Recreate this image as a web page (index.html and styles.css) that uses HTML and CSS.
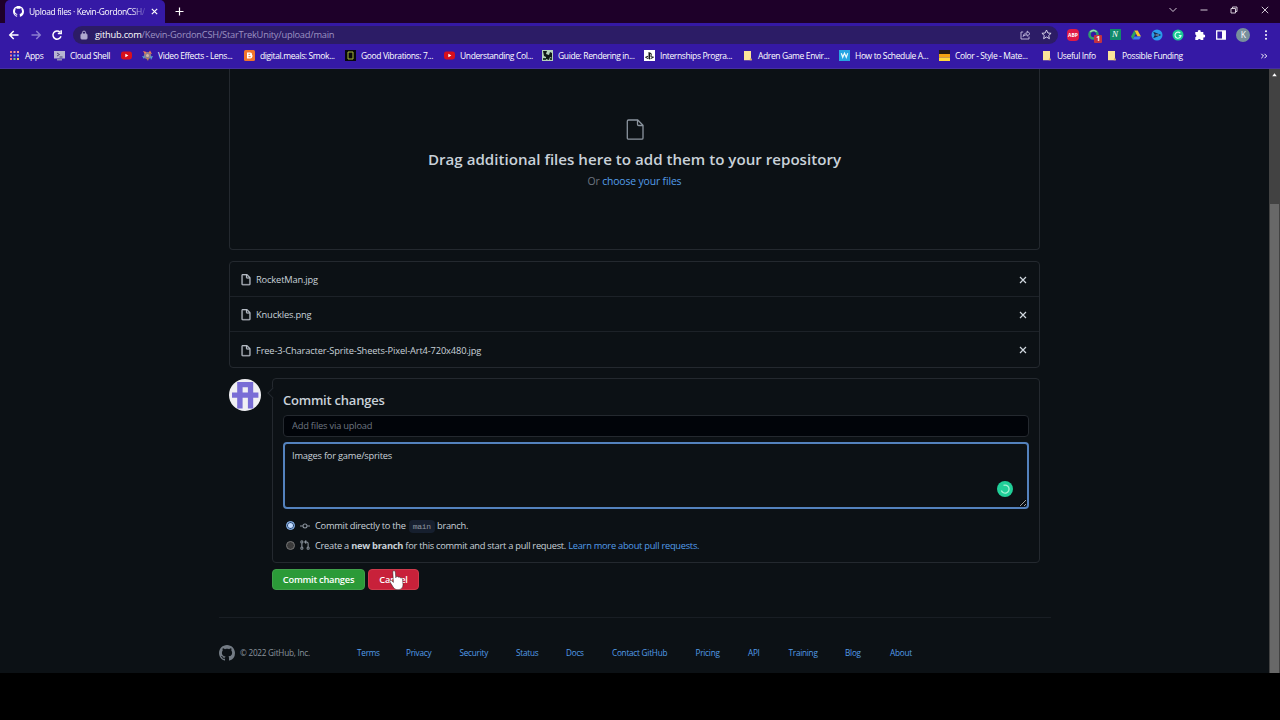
FILE: index.html
```html
<!DOCTYPE html>
<html lang="en">

<head>
    <meta charset="UTF-8">
    <title>Upload files · Kevin-GordonCSH/StarTrekUnity</title>
    <link rel="stylesheet" href="styles.css">
</head>

<body>

    <!-- shared icons -->
    <svg class="defs">
        <symbol id="github" viewBox="0 0 16 16"><path d="M8 0C3.58 0 0 3.58 0 8c0 3.54 2.29 6.53 5.47 7.59.4.07.55-.17.55-.38 0-.19-.01-.82-.01-1.49-2.01.37-2.53-.49-2.69-.94-.09-.23-.48-.94-.82-1.13-.28-.15-.68-.52-.01-.53.63-.01 1.08.58 1.23.82.72 1.21 1.87.87 2.33.66.07-.52.28-.87.51-1.07-1.78-.2-3.64-.89-3.64-3.95 0-.87.31-1.59.82-2.15-.08-.2-.36-1.02.08-2.12 0 0 .67-.21 2.2.82.64-.18 1.32-.27 2-.27s1.36.09 2 .27c1.53-1.04 2.2-.82 2.2-.82.44 1.1.16 1.92.08 2.12.51.56.82 1.27.82 2.15 0 3.07-1.87 3.75-3.65 3.95.29.25.54.73.54 1.48 0 1.07-.01 1.93-.01 2.2 0 .21.15.46.55.38A8.01 8.01 0 0 0 16 8c0-4.42-3.58-8-8-8z"/></symbol>
        <symbol id="file" viewBox="0 0 16 16"><path d="M3.75 1.5a.25.25 0 0 0-.25.25v11.5c0 .138.112.25.25.25h8.5a.25.25 0 0 0 .25-.25V6H9.75A1.75 1.75 0 0 1 8 4.25V1.5H3.75zm5.75.56v2.19c0 .138.112.25.25.25h2.19L9.5 2.06zM2 1.75C2 .784 2.784 0 3.75 0h5.086c.464 0 .909.184 1.237.513l3.414 3.414c.329.328.513.773.513 1.237v8.086A1.75 1.75 0 0 1 12.25 15h-8.5A1.75 1.75 0 0 1 2 13.25V1.75z"/></symbol>
        <symbol id="x" viewBox="0 0 10 10"><path d="M2 2l6 6M8 2l-6 6"/></symbol>
        <symbol id="youtube" viewBox="0 0 11 11"><rect y="1.5" width="11" height="8" rx="2.4" fill="#d80f1c"/><path d="M4.3 3.7v3.6l3.1-1.8z" fill="#fff"/></symbol>
        <symbol id="folder" viewBox="0 0 9 11"><path d="M1 1h7v6.500l.8 2.800H1z" fill="#fbe49a"/><path d="M7.300 7.500l1.500 2.800H6.600z" fill="#e2b95c"/></symbol>
    </svg>

    <header class="browser">
        <div class="titlebar">
            <div class="tab">
                <svg class="tab-logo"><use href="#github"/></svg>
                <span class="tab-title">Upload files · Kevin-GordonCSH/</span>
                <svg class="tab-close"><use href="#x"/></svg>
            </div>
            <svg class="new-tab" viewBox="0 0 9 9"><path d="M4.500.5v8M.5 4.500h8"/></svg>
            <div class="window-buttons">
                <svg viewBox="0 0 10 10"><path d="M1.500 3L5 6.500 8.500 3"/></svg>
                <svg viewBox="0 0 10 10"><path d="M1.500 5h7"/></svg>
                <svg viewBox="0 0 10 10"><path d="M2 3.500h4.500V8H2zM3.500 3.500V2H8v4.500H6.500"/></svg>
                <svg viewBox="0 0 10 10"><path d="M1.800 1.800l6.400 6.400M8.200 1.800L1.800 8.200"/></svg>
            </div>
        </div>

        <div class="toolbar">
            <div class="nav">
                <svg viewBox="0 0 12 12"><path d="M10.500 6H2M5.700 2L1.800 6l3.900 4"/></svg>
                <svg class="dim" viewBox="0 0 12 12"><path d="M1.500 6H10M6.300 2l3.900 4-3.900 4"/></svg>
                <svg viewBox="0 0 12 12"><path d="M10 7.200A4.100 4.100 0 1 1 9 3.200M10.200 1.200v3.400H6.800"/></svg>
            </div>
            <div class="omnibox">
                <svg class="lock" viewBox="0 0 8 10"><rect x="1" y="4" width="6" height="5" rx=".7"/><path d="M2.400 4V2.700a1.600 1.600 0 0 1 3.200 0V4"/></svg>
                <span class="url"><b>github.com</b>/Kevin-GordonCSH/StarTrekUnity/upload/main</span>
                <svg class="share" viewBox="0 0 11 11"><path d="M3.200 3H1v7h8V7.500M3.200 7.500c.3-2.300 1.600-3.500 4-3.500V2L10 4.700 7.200 7.200V5.700C5.500 5.700 4.200 6.200 3.200 7.500z"/></svg>
                <svg class="star" viewBox="0 0 11 11"><path d="M5.500 1l1.400 3 3.200.3-2.400 2.200.7 3.200-2.900-1.700-2.900 1.700.7-3.200L.9 4.300 4.100 4z"/></svg>
            </div>
            <div class="extensions">
                <span class="abp">ABP</span>
                <span class="badge-wrap">
                    <svg viewBox="0 0 12 12"><circle cx="5.500" cy="5.500" r="4" fill="none" stroke="#2f9e6b" stroke-width="2.600"/><path d="M2.300 3A4 4 0 0 1 8.500 2.800" fill="none" stroke="#9ed6bc" stroke-width="1.400"/></svg>
                    <i class="count">1</i>
                </span>
                <span class="script-n">N</span>
                <svg viewBox="0 0 12 12"><path d="M4.200 1.500h3.500l3.300 6H7.600z" fill="#f6c52b"/><path d="M4.200 1.500L1 7.500l1.700 3 3.300-6z" fill="#2ba35f"/><path d="M4.500 7.500H11l-1.700 3H2.700z" fill="#3d7df0"/></svg>
                <svg viewBox="0 0 12 12"><circle cx="6" cy="6" r="5.500" fill="#2a9bea"/><path d="M2.200 2.800L10.300 6 2.200 9.200 3.800 6z" fill="#17254d"/><path d="M4.500 6H8" stroke="#dff" stroke-width=".7"/></svg>
                <svg viewBox="0 0 12 12"><circle cx="6" cy="6" r="5.500" fill="#19c894"/><path d="M8.300 4.200A3 3 0 1 0 9 6.600H6.800" fill="none" stroke="#d9fff0" stroke-width="1.100"/></svg>
                <svg viewBox="0 0 12 12"><path d="M1.300 3h2.500a1.500 1.500 0 1 1 2.900 0h2.600v2.600a1.500 1.500 0 1 1 0 2.900V11H6.800a1.500 1.500 0 0 0-2.900 0H1.300V8.300a1.400 1.400 0 0 0 0-2.700z" fill="#fff"/></svg>
                <svg viewBox="0 0 12 12"><path d="M1.700 1.900h8.600v8.200H1.700z" fill="none" stroke="#fff" stroke-width="1.300"/><path d="M7 2h3.300v8H7z" fill="#fff"/></svg>
                <span class="profile">K</span>
                <svg class="menu" viewBox="0 0 12 12"><circle cx="6" cy="2.200" r="1"/><circle cx="6" cy="6" r="1"/><circle cx="6" cy="9.800" r="1"/></svg>
            </div>
        </div>

        <nav class="bookmarks">
            <a><svg viewBox="0 0 11 11"><path d="M1 1h2v2H1zM1 8h2v2H1zM1 4.500h2v2H1z" fill="#ef7b86"/><path d="M4.500 1h2v2h-2zM8 1h2v2H8z" fill="#f39aa0"/><path d="M4.500 4.500h2v2h-2zM8 4.500h2v2H8z" fill="#79b4fb"/><path d="M4.500 8h2v2h-2z" fill="#6cce8c"/><path d="M8 8h2v2H8z" fill="#f5d05f"/></svg><span>Apps</span></a>
            <a><svg viewBox="0 0 11 11"><path d="M0 1h11v7.500H0z" fill="#b7b5d2"/><path d="M3 9h5v1.500H3z" fill="#8e8bb5"/><path d="M3 3l2.500 1.500L3 6M5.500 7h3" fill="none" stroke="#4a4379"/></svg><span>Cloud Shell</span></a>
            <a><svg><use href="#youtube"/></svg></a>
            <a><svg viewBox="0 0 11 11"><circle cx="5.500" cy="5.500" r="3.600" fill="#8a7f8c"/><path d="M1 1l3.500 1L3 4.500zM8 .5L10 4 6.500 3z" fill="#ef7b4f"/><path d="M0 6l3 .5L2 9zM8 6.500l3-.5-2 4z" fill="#58a4cf"/><path d="M4 8h3l-1 3z" fill="#b98152"/><circle cx="5.500" cy="5.500" r="1.500" fill="#d8b5a4"/></svg><span>Video Effects - Lens...</span></a>
            <a><svg viewBox="0 0 11 11"><rect width="11" height="11" rx="1.500" fill="#f2742b"/><path d="M3 2.500h3c2 0 2 1.500 2 2.300.8.300.8 3.700-1.700 3.700H3z" fill="#fff"/><path d="M4.500 4.300h1.600M4.500 6.700h2.200" stroke="#f2742b"/></svg><span>digital.meals: Smok...</span></a>
            <a><svg viewBox="0 0 11 11"><path d="M0 0h11v11H0z" fill="#07080b"/><path d="M3 2h5v7H3z" fill="none" stroke="#a9b83c"/></svg><span>Good Vibrations: 7...</span></a>
            <a><svg><use href="#youtube"/></svg><span>Understanding Col...</span></a>
            <a><svg viewBox="0 0 11 11"><path d="M0 0h11v11H0z" fill="#b5d2ba"/><path d="M1 1h4L4 4l3 1 1-3 2 1v5l-2-1-1 3-3-1V7L2 6z" fill="#101816"/><path d="M1 8h3v2H1zM8 8h2v2H8z" fill="#25402e"/></svg><span>Guide: Rendering in...</span></a>
            <a><svg viewBox="0 0 11 11"><path d="M0 0h11v11H0z" fill="#fff"/><path d="M4.500 2v7l1.500.5V3.800c1 .2.800 1.800.4 2.200 1.800.6 1.900-2.500.1-3.300z" fill="#151515"/><path d="M4 6.200L1.500 7.300 4 8.500M6.500 6.600l3 .6-3 1.500" fill="none" stroke="#151515"/></svg><span>Internships Progra...</span></a>
            <a><svg class="folder"><use href="#folder"/></svg><span>Adren Game Envir...</span></a>
            <a><svg viewBox="0 0 11 11"><path d="M0 0h11v11H0z" fill="#27a5e2"/><path d="M2.300 3.300l1.400 4 1.800-4 1.800 4 1.400-4" fill="none" stroke="#e9faff" stroke-width="1.200"/></svg><span>How to Schedule A...</span></a>
            <a><svg viewBox="0 0 11 11"><path d="M0 0h11v4H0z" fill="#231b14"/><path d="M0 4h11v3.500H0z" fill="#f2a313"/><path d="M0 7.500h11V11H0z" fill="#ffd83c"/></svg><span>Color - Style - Mate...</span></a>
            <a><svg class="folder"><use href="#folder"/></svg><span>Useful Info</span></a>
            <a><svg class="folder"><use href="#folder"/></svg><span>Possible Funding</span></a>
            <a class="more"><svg viewBox="0 0 8 8"><path d="M1.300 1.800L3.500 4 1.300 6.200M4.500 1.800L6.700 4 4.500 6.200"/></svg></a>
        </nav>
    </header>

    <div class="viewport">
        <main class="page">
            <section class="dropzone">
                <svg class="big-file" viewBox="0 0 18 21"><path d="M2.500 1h9.200L17 6.200V19a1.200 1.200 0 0 1-1.200 1.200H2.500A1.200 1.200 0 0 1 1.300 19V2.200A1.200 1.200 0 0 1 2.500 1zM11.500 1v4.300c0 .8.400 1.200 1.200 1.200H17"/></svg>
                <h1>Drag additional files here to add them to your repository</h1>
                <p>Or <a>choose your files</a></p>
            </section>

            <ul class="files">
                <li><svg class="octicon"><use href="#file"/></svg><span>RocketMan.jpg</span><svg class="remove"><use href="#x"/></svg></li>
                <li><svg class="octicon"><use href="#file"/></svg><span>Knuckles.png</span><svg class="remove"><use href="#x"/></svg></li>
                <li><svg class="octicon"><use href="#file"/></svg><span>Free-3-Character-Sprite-Sheets-Pixel-Art4-720x480.jpg</span><svg class="remove"><use href="#x"/></svg></li>
            </ul>

            <form class="commit">
                <svg class="avatar" viewBox="0 0 32 32">
                    <circle cx="16" cy="16" r="16" fill="#f0f0f4"/>
                    <path d="M8.200 3h16v10.600h5.200v5.200h-5.200v10.600h-5.300V18.800h-5.300v10.600H8.200V18.800H3v-5.200h5.200zM13.600 8.300v5.300h5.300V8.300z" fill="#796dd6"/>
                </svg>
                <div class="commit-body">
                    <div class="commit-box">
                        <h2>Commit changes</h2>
                        <input class="summary" type="text" placeholder="Add files via upload">
                        <div class="description">
                            <textarea>Images for game/sprites</textarea>
                            <svg class="grammarly" viewBox="0 0 16 16"><circle cx="8" cy="8" r="8" fill="#20cf98"/><path d="M6.500 4.400A4 4 0 1 1 4.300 9.500" fill="none" stroke="#a4f3d6" stroke-width="1.300"/></svg>
                        </div>
                        <label class="choice">
                            <input type="radio" name="target" checked>
                            <svg viewBox="0 0 16 16"><path d="M0 8h4.500M11.500 8H16"/><circle cx="8" cy="8" r="3.200"/></svg>
                            <span>Commit directly to the <code>main</code> branch.</span>
                        </label>
                        <label class="choice">
                            <input type="radio" name="target">
                            <svg viewBox="0 0 16 16"><circle cx="3" cy="3" r="1.700"/><circle cx="3" cy="13" r="1.700"/><circle cx="13" cy="13" r="1.700"/><path d="M3 5v6M13 11V5.500C13 4 12 3.200 10.500 3.200H8M10 .8L7.600 3.200 10 5.600"/></svg>
                            <span>Create a <b>new branch</b> for this commit and start a pull request. <a>Learn more about pull requests.</a></span>
                        </label>
                    </div>
                    <div class="buttons">
                        <button type="button" class="green">Commit changes</button>
                        <button type="button" class="red">Cancel
                            <svg class="cursor" viewBox="0 0 15 21"><path d="M3.800 1.800c0-1.500 2.300-1.500 2.500 0l.5 6 .3-1c.8-.8 2-.3 2.100.5.8-.6 2-.2 2.100.7 1-.5 2.200.1 2.200 1.200l.5 5.500c0 3-2 5-5 5-2.500 0-4-1-5-2.900L1 12c-.7-1.300.9-2.300 1.900-1.200l1.500 1.600z"/></svg>
                        </button>
                    </div>
                </div>
            </form>

            <footer>
                <svg class="footer-logo"><use href="#github"/></svg>
                <span class="copy">© 2022 GitHub, Inc.</span>
                <nav class="links">
                    <a>Terms</a>
                    <a>Privacy</a>
                    <a>Security</a>
                    <a>Status</a>
                    <a>Docs</a>
                    <a>Contact GitHub</a>
                    <a>Pricing</a>
                    <a>API</a>
                    <a>Training</a>
                    <a>Blog</a>
                    <a>About</a>
                </nav>
            </footer>
        </main>
        <div class="scrollbar">
            <svg viewBox="0 0 10 10"><path d="M5 3l2.500 3.500h-5z"/></svg>
            <div class="thumb"></div>
        </div>
    </div>

</body>

</html>
```

FILE: styles.css
```css
* {
    box-sizing: border-box;
}

body {
    margin: 0;
    height: 720px;
    overflow: hidden;
    background: #000;
    color: #c9d1d9;
    font-family: "Open Sans", "Noto Sans", sans-serif;
    font-size: 9px;
}

.defs {
    display: none;
}

svg {
    display: block;
    flex: none;
}

/* browser window */
.browser {
    height: 69px;
    background: #3519a5;
    border-bottom: 1px solid #452fa0;
    color: #fff;
}

.titlebar {
    height: 23px;
    display: flex;
    align-items: center;
    background: #1e0029;
}

.tab {
    width: 160px;
    height: 23px;
    margin-left: 5px;
    padding: 0 6px 0 8px;
    display: flex;
    align-items: center;
    background: #3519a5;
    border-radius: 5px 5px 0 0;
}

.tab-logo {
    width: 11px;
    height: 11px;
    fill: #fff;
}

.tab-title {
    margin-left: 5px;
    white-space: nowrap;
    font-size: 8.5px;
    letter-spacing: -0.38px;
    -webkit-mask-image: linear-gradient(to right, #000 88%, rgba(0, 0, 0, 0.2));
    mask-image: linear-gradient(to right, #000 88%, rgba(0, 0, 0, 0.2));
}

.tab-close {
    width: 9px;
    height: 9px;
    margin-left: auto;
    stroke: #fff;
    stroke-width: 1.3;
}

.new-tab {
    width: 9px;
    height: 9px;
    margin-left: 10px;
    stroke: #fff;
    stroke-width: 1.2;
}

.window-buttons {
    display: flex;
    gap: 20.5px;
    margin: -4px 10.5px 0 auto;
}

.window-buttons svg {
    width: 10px;
    height: 10px;
    fill: none;
    stroke: #e4dce8;
    stroke-width: 0.9;
}

.toolbar {
    height: 23px;
    display: flex;
    align-items: center;
}

.nav {
    width: 73px;
    padding-left: 8px;
    display: flex;
    gap: 9.5px;
}

.nav svg {
    width: 12px;
    height: 12px;
    fill: none;
    stroke: #fff;
    stroke-width: 1.5;
}

.nav .dim {
    stroke: #8b7dd0;
}

.omnibox {
    width: 985px;
    height: 18px;
    padding: 0 6px 0 7px;
    display: flex;
    align-items: center;
    background: #2c1c66;
    border-radius: 9px;
}

.lock {
    width: 8px;
    height: 10px;
    fill: #b0a8ce;
    stroke: #b0a8ce;
}

.lock path {
    fill: none;
}

.url {
    margin-left: 7px;
    margin-right: auto;
    color: #9c92c2;
    font-size: 9.3px;
    letter-spacing: -0.23px;
}

.url b {
    color: #fff;
    font-weight: 400;
}

.share,
.star {
    width: 11px;
    height: 11px;
    fill: none;
    stroke: #c8c1e3;
    stroke-width: 0.9;
}

.star {
    margin-left: 10px;
    stroke: #e6e2f5;
}

.extensions {
    display: flex;
    align-items: center;
    gap: 9.3px;
    margin-left: 9px;
}

.extensions > svg,
.badge-wrap svg {
    width: 12px;
    height: 12px;
}

.abp {
    width: 12px;
    height: 12px;
    border-radius: 4px;
    background: #e01b45;
    font-size: 5px;
    font-weight: 700;
    line-height: 12px;
    text-align: center;
}

.badge-wrap {
    position: relative;
}

.count {
    position: absolute;
    left: 6px;
    top: 6px;
    width: 8px;
    height: 8px;
    border-radius: 1px;
    background: #c33240;
    font-size: 7px;
    font-style: normal;
    font-weight: 700;
    line-height: 8px;
    text-align: center;
}

.script-n {
    width: 11px;
    height: 11px;
    background: #118a6a;
    font: italic 9px/11px "Liberation Serif", serif;
    text-align: center;
}

.profile {
    width: 14px;
    height: 14px;
    border-radius: 50%;
    background: #78909c;
    font-size: 8.5px;
    line-height: 14px;
    text-align: center;
}

.menu {
    fill: #fff;
}

.bookmarks {
    height: 19px;
    padding-left: 9px;
    display: grid;
    grid-template-columns: 45px 67px 21px 102px 101px 99px 98px 102px 98px 97px 100px 102px 65px 154px auto;
    align-items: center;
    font-size: 8.5px;
    letter-spacing: -0.38px;
    white-space: nowrap;
}

.bookmarks a {
    display: flex;
    align-items: center;
    gap: 5px;
}

.bookmarks svg {
    width: 11px;
    height: 11px;
}

.bookmarks .more svg {
    width: 8px;
    height: 8px;
    fill: none;
    stroke: #fff;
}

/* github page */
.viewport {
    height: 604px;
    display: flex;
    background: #0c1115;
}

.page {
    width: 811px;
    margin-left: 229px;
}

.page a {
    color: #539de9;
}

.dropzone {
    height: 181px;
    padding-top: 50px;
    border: 1px solid #24292f;
    border-top: 0;
    border-radius: 0 0 4px 4px;
    text-align: center;
}

.big-file {
    width: 18px;
    height: 21px;
    margin: 0 auto;
    fill: none;
    stroke: #8b949e;
    stroke-width: 1.3;
}

.dropzone h1 {
    margin: 8px 0 0;
    font-size: 15.13px;
    font-weight: 600;
    line-height: 22px;
}

.dropzone p {
    margin: 2px 0 0;
    color: #6e7681;
    font-size: 10.4px;
    letter-spacing: -0.14px;
    line-height: 18px;
}

.files {
    margin: 11px 0 0;
    padding: 0;
    list-style: none;
    border: 1px solid #24292f;
    border-radius: 4px;
}

.files li {
    height: 35px;
    padding: 1px 11px 0;
    display: flex;
    align-items: center;
    border-bottom: 1px solid #1d2228;
}

.files li:last-child {
    border-bottom: 0;
}

.octicon {
    width: 12px;
    height: 12px;
    margin: 1px 4px 0 -1px;
    fill: #b4bcc4;
    stroke: #b4bcc4;
    stroke-width: 0.3;
}

.files span {
    margin-right: auto;
    font-size: 9.3px;
    letter-spacing: -0.15px;
}

.remove {
    width: 10px;
    height: 10px;
    stroke: #d0d7de;
    stroke-width: 1.2;
}

.commit {
    display: flex;
    gap: 11px;
    margin-top: 10px;
}

.avatar {
    width: 32px;
    height: 32px;
    margin-top: 0.5px;
}

.commit-body {
    flex: 1;
}

.commit-box {
    position: relative;
    height: 185px;
    padding: 11px 10px 0;
    border: 1px solid #24292f;
    border-radius: 4px;
}

/* pointer toward the avatar */
.commit-box::before {
    content: "";
    position: absolute;
    left: -4.500px;
    top: 10px;
    width: 7px;
    height: 7px;
    background: #0c1115;
    border: solid #24292f;
    border-width: 0 0 1px 1px;
    transform: rotate(45deg);
}

.commit-box h2 {
    margin: 0;
    font-size: 13px;
    font-weight: 600;
    letter-spacing: -0.22px;
    line-height: 20px;
}

.summary {
    display: block;
    width: 100%;
    height: 22px;
    margin-top: 5px;
    padding: 0 8px 1px;
    background: #010409;
    border: 1px solid #24292f;
    border-radius: 4px;
    font: 9.3px "Open Sans", sans-serif;
    letter-spacing: -0.2px;
}

.summary::placeholder {
    color: #6e7681;
}

.description {
    position: relative;
    margin-top: 5px;
}

textarea {
    display: block;
    width: 100%;
    height: 67px;
    padding: 5px 7px;
    background: #0c1115;
    border: 2px solid #5482bd;
    border-radius: 4px;
    color: #c9d1d9;
    font: 9.3px/14px "Open Sans", sans-serif;
    letter-spacing: -0.22px;
}

.grammarly {
    position: absolute;
    right: 16px;
    bottom: 12px;
    width: 16px;
    height: 16px;
}

.choice {
    height: 19.500px;
    padding-left: 3px;
    display: flex;
    align-items: center;
    font-size: 9.3px;
    letter-spacing: -0.27px;
}

.description + .choice {
    margin-top: 7px;
}

.choice input {
    appearance: none;
    width: 9px;
    height: 9px;
    margin: 0 5px 0 0;
    background: #3b3b3b;
    border: 1px solid #757575;
    border-radius: 50%;
}

.choice input:checked {
    background: #c3dcff;
    border: 1px solid #7ba6de;
    box-shadow: inset 0 0 0 1px #26456e;
}

.choice svg {
    width: 10px;
    height: 10px;
    margin-right: 5px;
    fill: none;
    stroke: #8b949e;
    stroke-width: 1.7;
}

code {
    margin: 0 0 0 1px;
    padding: 2px 4px;
    background: #161f2e;
    border-radius: 4px;
    color: #8b949e;
    font: 8px "Liberation Mono", monospace;
}

.buttons {
    display: flex;
    gap: 3px;
    margin-top: 6px;
}

.buttons button {
    position: relative;
    height: 21px;
    padding: 0;
    border: 1px solid #3fa04a;
    border-radius: 4px;
    background: #2b9a38;
    color: #fff;
    font: 600 9.3px "Open Sans", sans-serif;
    letter-spacing: -0.25px;
}

.buttons .green {
    width: 93px;
}

.buttons .red {
    width: 51px;
    background: #c8213a;
    border-color: #cf3a4c;
}

.cursor {
    position: absolute;
    left: 20px;
    top: 0;
    width: 15px;
    height: 21px;
    fill: #fff;
    stroke: #222;
    stroke-width: 0.5;
}

footer {
    width: 832px;
    height: 56px;
    margin: 27px 0 0 -10px;
    padding-top: 14px;
    display: flex;
    align-items: center;
    border-top: 1px solid #191e24;
    font-size: 8.2px;
    letter-spacing: -0.24px;
}

.footer-logo {
    width: 16px;
    height: 16px;
    fill: #737b84;
}

.copy {
    width: 117px;
    margin-left: 5px;
    color: #8b949e;
}

.links {
    display: grid;
    grid-template-columns: 49px 53.5px 56.5px 50px 46px 83.5px 52.5px 40.5px 56.500px 45px auto;
    white-space: nowrap;
}

.scrollbar {
    width: 11px;
    margin-left: auto;
    padding: 0 1px;
    background: #424242;
}

.scrollbar svg {
    width: 9px;
    height: 12px;
    fill: #fff;
}

.thumb {
    height: 469px;
    margin-top: 123px;
    background: #686868;
}
```
